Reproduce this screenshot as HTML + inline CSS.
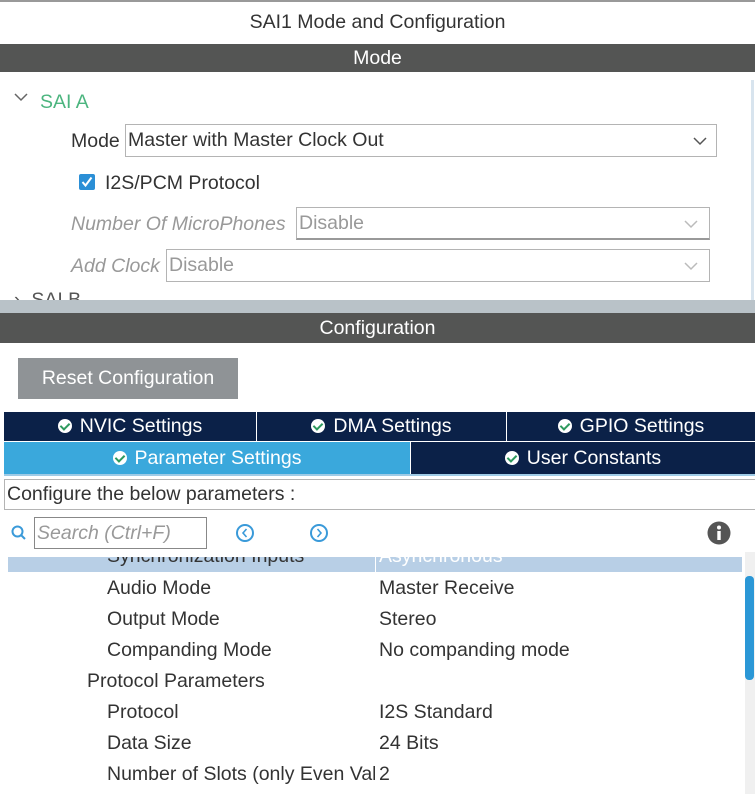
<!DOCTYPE html>
<html><head><style>
*{margin:0;padding:0;box-sizing:border-box}
body{width:755px;height:794px;overflow:hidden;background:#fff;font-family:"Liberation Sans",sans-serif;position:relative;color:#333;font-size:19.5px}
.a{position:absolute;white-space:nowrap}
.bar{position:absolute;left:0;width:755px;background:#545554;color:#fff;text-align:center;font-size:19.5px}
.box{position:absolute;border:1px solid #b4b4b4;background:#fff;font-size:19.5px;padding-left:2px;line-height:30px}
.tab{position:absolute;background:#0b2148;color:#fff;font-size:19.5px;text-align:center;line-height:28px}
.ck{display:inline-block;width:14px;height:14px;border-radius:50%;background:#fff;position:relative;vertical-align:-1px;margin-right:8px}
.ck:after{content:"";position:absolute;left:4px;top:2px;width:4px;height:7px;border:solid #2e9a5e;border-width:0 2px 2px 0;transform:rotate(45deg)}
.row{position:absolute;font-size:19.5px;color:#333;white-space:nowrap}
</style></head><body>
<div class="a" style="left:0;top:0;width:755px;height:2px;background:#999"></div>
<div class="a" style="left:0;top:11px;width:755px;text-align:center">SAI1 Mode and Configuration</div>
<div class="bar" style="top:44px;height:28px;line-height:28px">Mode</div>
<div class="a" style="left:751px;top:80px;width:3px;height:220px;background:#d8e4ee"></div>
<svg class="a" style="left:14px;top:93px" width="16" height="10"><path d="M1 1 L7 7 L13 1" stroke="#666" fill="none" stroke-width="1.5"/></svg>
<div class="a" style="left:40px;top:91px;color:#4cb57f">SAI A</div>
<div class="a" style="left:71px;top:130px">Mode</div>
<div class="box" style="left:125px;top:124px;width:592px;height:33px">Master with Master Clock Out</div>
<svg class="a" style="left:693px;top:136px" width="14" height="10"><path d="M1 2 L7 8 L13 2" stroke="#555" fill="none" stroke-width="1.5"/></svg>
<div class="a" style="left:79px;top:174px;width:16px;height:16px;background:#2b8fd6;border-radius:2px"></div>
<svg class="a" style="left:79px;top:174px" width="16" height="16"><path d="M3.5 8 L6.5 11.5 L12.5 3.5" stroke="#fff" fill="none" stroke-width="2"/></svg>
<div class="a" style="left:105px;top:172px">I2S/PCM Protocol</div>
<div class="a" style="left:71px;top:213px;color:#999;font-style:italic">Number Of MicroPhones</div>
<div class="box" style="left:296px;top:207px;width:414px;height:33px;color:#999;border-bottom:2px solid #999">Disable</div>
<svg class="a" style="left:684px;top:219px" width="14" height="10"><path d="M1 2 L7 8 L13 2" stroke="#bbb" fill="none" stroke-width="1.5"/></svg>
<div class="a" style="left:71px;top:255px;color:#999;font-style:italic">Add Clock</div>
<div class="box" style="left:166px;top:249px;width:544px;height:33px;color:#999">Disable</div>
<svg class="a" style="left:684px;top:261px" width="14" height="10"><path d="M1 2 L7 8 L13 2" stroke="#bbb" fill="none" stroke-width="1.5"/></svg>
<div class="a" style="left:14px;top:290px;color:#555;height:10px;overflow:hidden;line-height:20px">›&nbsp;&nbsp;SAI B</div>
<div class="a" style="left:0;top:300px;width:755px;height:13px;background:#b9c2c8"></div>
<div class="bar" style="top:313px;height:30px;line-height:30px">Configuration</div>
<div class="a" style="left:18px;top:358px;width:220px;height:41px;background:#8f9396;color:#fff;text-align:center;line-height:41px">Reset Configuration</div>
<div class="tab" style="left:4px;top:412px;width:252px;height:29px"><span class="ck"></span>NVIC Settings</div>
<div class="tab" style="left:257px;top:412px;width:249px;height:29px"><span class="ck"></span>DMA Settings</div>
<div class="tab" style="left:507px;top:412px;width:248px;height:29px"><span class="ck"></span>GPIO Settings</div>
<div class="tab" style="left:4px;top:442px;width:406px;height:32px;background:#3aa8dc;line-height:32px"><span class="ck"></span>Parameter Settings</div>
<div class="tab" style="left:411px;top:442px;width:344px;height:32px;line-height:32px"><span class="ck"></span>User Constants</div>
<div class="a" style="left:4px;top:474px;width:751px;height:2px;background:#9fcbe6"></div>
<div class="box" style="left:4px;top:479px;width:760px;height:31px;color:#333;line-height:29px">Configure the below parameters :</div>
<svg class="a" style="left:11px;top:525px" width="16" height="16"><circle cx="6.5" cy="6.5" r="5" stroke="#3a9ad9" stroke-width="2" fill="none"/><path d="M10 10 L14 14" stroke="#3a9ad9" stroke-width="2"/></svg>
<div class="box" style="left:34px;top:517px;width:173px;height:32px;color:#999;font-style:italic;border-color:#888">Search (Ctrl+F)</div>
<svg class="a" style="left:235px;top:523px" width="20" height="20"><circle cx="10" cy="10" r="8" stroke="#3a9ad9" stroke-width="2" fill="none"/><path d="M11.5 6 L8 10 L11.5 14" stroke="#3a9ad9" stroke-width="1.6" fill="none"/></svg>
<svg class="a" style="left:309px;top:523px" width="20" height="20"><circle cx="10" cy="10" r="8" stroke="#3a9ad9" stroke-width="2" fill="none"/><path d="M8.5 6 L12 10 L8.5 14" stroke="#3a9ad9" stroke-width="1.6" fill="none"/></svg>
<svg class="a" style="left:707px;top:521px" width="24" height="24"><circle cx="12" cy="12" r="11.5" fill="#555"/><rect x="10.3" y="10" width="3.4" height="9" fill="#fff"/><circle cx="12" cy="6.5" r="2" fill="#fff"/></svg>
<div class="a" style="left:8px;top:557px;width:734px;height:15px;background:#b8cfe6;overflow:hidden"></div>
<div class="a" style="left:375px;top:557px;width:1px;height:15px;background:#fff"></div>
<div class="a" style="left:8px;top:557px;width:734px;height:15px;overflow:hidden">
<div class="a" style="left:99px;top:-12px;color:#333">Synchronization Inputs</div>
<div class="a" style="left:371px;top:-12px;color:#fff">Asynchronous</div></div>
<div class="a" style="left:745px;top:552px;width:10px;height:242px;background:#f0f0f0"></div>
<div class="a" style="left:745px;top:576px;width:9px;height:104px;background:#2b97d6;border-radius:4px"></div>
<div class="row" style="left:107px;top:577px">Audio Mode</div><div class="row" style="left:379px;top:577px">Master Receive</div>
<div class="row" style="left:107px;top:608px">Output Mode</div><div class="row" style="left:379px;top:608px">Stereo</div>
<div class="row" style="left:107px;top:639px">Companding Mode</div><div class="row" style="left:379px;top:639px">No companding mode</div>
<div class="row" style="left:87px;top:670px">Protocol Parameters</div>
<div class="row" style="left:107px;top:701px">Protocol</div><div class="row" style="left:379px;top:701px">I2S Standard</div>
<div class="row" style="left:107px;top:732px">Data Size</div><div class="row" style="left:379px;top:732px">24 Bits</div>
<div class="row" style="left:107px;top:763px;width:268px;overflow:hidden">Number of Slots (only Even Val.</div><div class="row" style="left:379px;top:763px">2</div>
</body></html>
